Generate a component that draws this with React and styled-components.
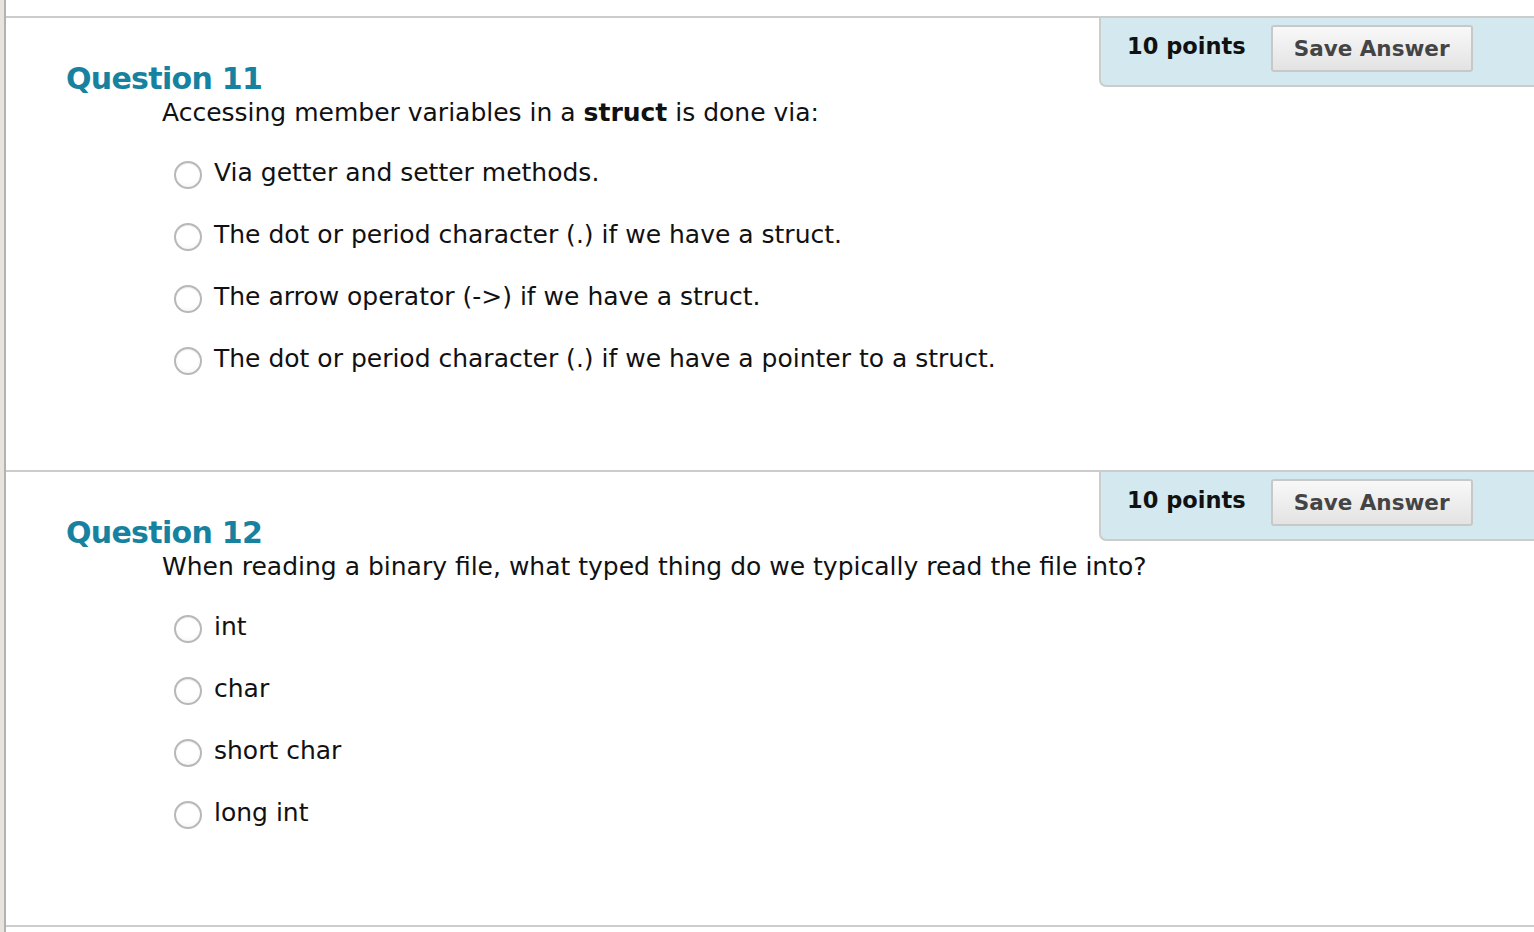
import React from 'react';
import styled, { createGlobalStyle } from 'styled-components';

const GlobalStyle = createGlobalStyle`
  html, body {
    margin: 0;
    padding: 0;
    background: #ffffff;
  }
  body {
    font-family: "DejaVu Sans", "Noto Sans", sans-serif;
    color: #111111;
  }
`;

const Frame = styled.div`
  border-left: 4px solid #e6e4dc;
  min-height: 932px;
  box-sizing: border-box;
`;

const Inner = styled.div`
  border-left: 2px solid #b2b2b2;
  min-height: 932px;
  padding-top: 16px;
  box-sizing: border-box;
`;

const QuestionBlock = styled.div`
  border-top: 2px solid #cccccc;
  height: 454px;
  box-sizing: border-box;
  &:last-child {
    border-bottom: 2px solid #cccccc;
    height: 457px;
  }
`;

const PointsBox = styled.div`
  float: right;
  width: 435px;
  height: 69px;
  box-sizing: border-box;
  display: flex;
  align-items: center;
  gap: 25px;
  padding: 0 0 7px 26px;
  background: #d3e9ef;
  border-left: 2px solid #cccccc;
  border-bottom: 2px solid #cccccc;
  border-bottom-left-radius: 7px;
`;

const Points = styled.span`
  font-size: 22.5px;
  font-weight: bold;
  color: #111111;
  margin-bottom: 4px;
`;

const SaveButton = styled.button`
  width: 202px;
  height: 47px;
  font-family: inherit;
  font-size: 21.5px;
  font-weight: bold;
  color: #444444;
  background: linear-gradient(#f8f8f8, #e3e3e3);
  border: 2px solid #c8c8c8;
  border-radius: 3px;
`;

const Heading = styled.h2`
  margin: 0;
  padding: 42px 0 0 60px;
  font-size: 30px;
  line-height: 38px;
  letter-spacing: -0.7px;
  font-weight: bold;
  color: #17829f;
`;

const Prompt = styled.div`
  padding-left: 156px;
  font-size: 25px;
  line-height: 30px;
`;

const Options = styled.ul`
  list-style: none;
  margin: 28px 0 0;
  padding: 0 0 0 168px;
  display: flex;
  flex-direction: column;
  gap: 28px;
`;

const Option = styled.li`
  display: flex;
  align-items: center;
  gap: 12px;
  font-size: 25px;
  line-height: 34px;
`;

const Radio = styled.span`
  width: 24px;
  height: 24px;
  border-radius: 50%;
  border: 2px solid #b8b8b8;
  background: radial-gradient(circle at 50% 35%, #ffffff 55%, #f0f0f0);
  box-shadow: inset 0 1px 1px rgba(0, 0, 0, 0.08);
  flex: none;
  margin-top: 4px;
`;

const questions = [
  {
    id: 11,
    prompt: (
      <>
        Accessing member variables in a <b>struct</b> is done via:
      </>
    ),
    options: [
      'Via getter and setter methods.',
      'The dot or period character (.) if we have a struct.',
      'The arrow operator (->) if we have a struct.',
      'The dot or period character (.) if we have a pointer to a struct.',
    ],
  },
  {
    id: 12,
    prompt: 'When reading a binary file, what typed thing do we typically read the file into?',
    options: ['int', 'char', 'short char', 'long int'],
  },
];

function Question({ q }) {
  return (
    <QuestionBlock>
      <PointsBox>
        <Points>10 points</Points>
        <SaveButton type="button">Save Answer</SaveButton>
      </PointsBox>
      <Heading>Question {q.id}</Heading>
      <Prompt>{q.prompt}</Prompt>
      <Options>
        {q.options.map((o) => (
          <Option key={o}>
            <Radio />
            {o}
          </Option>
        ))}
      </Options>
    </QuestionBlock>
  );
}

export default function App() {
  return (
    <>
      <GlobalStyle />
      <Frame>
        <Inner>
          {questions.map((q) => (
            <Question key={q.id} q={q} />
          ))}
        </Inner>
      </Frame>
    </>
  );
}
